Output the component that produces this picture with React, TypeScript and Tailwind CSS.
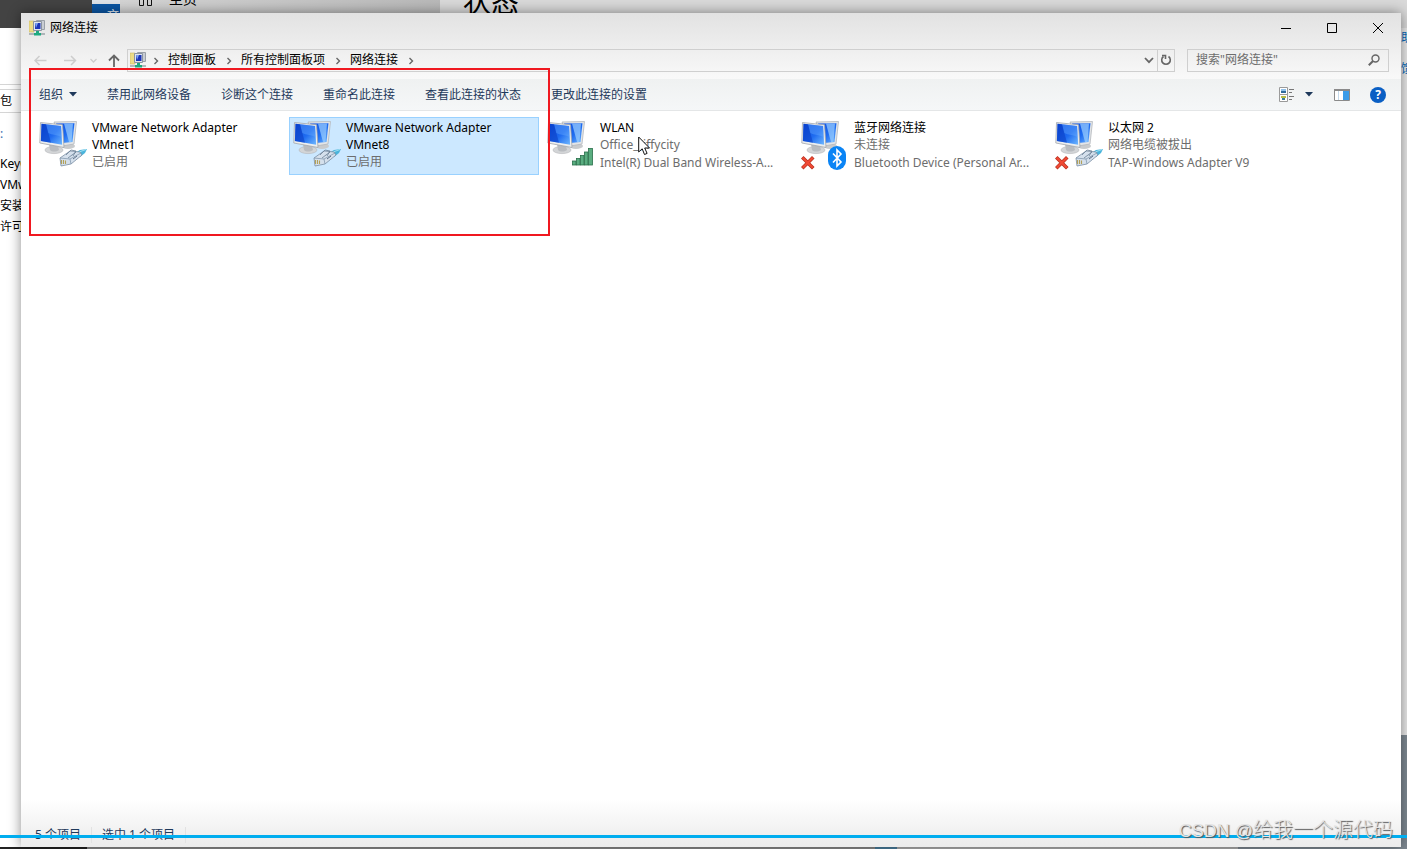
import type { ReactNode } from "react";
import { useState } from "react";

type Badge = "plug" | "signal" | "bluetooth";

interface Connection {
  id: string;
  name: string;
  details: string[];
  badge: Badge;
  offline?: boolean;
}

const connections: Connection[] = [
  { id: "vmnet1", name: "VMware Network Adapter VMnet1", details: ["已启用"], badge: "plug" },
  { id: "vmnet8", name: "VMware Network Adapter VMnet8", details: ["已启用"], badge: "plug" },
  {
    id: "wlan",
    name: "WLAN",
    details: ["Office_Jiffycity", "Intel(R) Dual Band Wireless-A..."],
    badge: "signal",
  },
  {
    id: "bluetooth",
    name: "蓝牙网络连接",
    details: ["未连接", "Bluetooth Device (Personal Ar..."],
    badge: "bluetooth",
    offline: true,
  },
  {
    id: "ethernet2",
    name: "以太网 2",
    details: ["网络电缆被拔出", "TAP-Windows Adapter V9"],
    badge: "plug",
    offline: true,
  },
];

const crumbs = ["控制面板", "所有控制面板项", "网络连接"];

const commands = [
  "禁用此网络设备",
  "诊断这个连接",
  "重命名此连接",
  "查看此连接的状态",
  "更改此连接的设置",
];

function FolderIcon() {
  return (
    <svg width="16" height="16" viewBox="0 0 16 16" className="shrink-0">
      <path d="M0 1h5v11H0z" fill="#ecdc86" stroke="#cdb963" strokeWidth=".6" />
      <path d="M7.500.500h8v9h-8z" fill="#c9cdd3" stroke="#9aa0a8" />
      <path d="M4.500 1.500h8v9h-8z" fill="#dfe5ee" stroke="#8a93a0" />
      <path d="M6 3h5.500v6H6z" fill="#1c35b8" />
      <path d="M6 3h3L7 8z" fill="#7da1f0" />
      <path d="M7 11h3v2h2v2.500H5V13h2z" fill="#1ea980" />
      <path d="M0 14h5M12 14h4" stroke="#9aa3a8" strokeWidth="1.400" />
    </svg>
  );
}

function Plug() {
  return (
    <g strokeLinejoin="round">
      <path d="M36 34l5-3 7-1-2 4-5 4z" fill="#49b4dc" />
      <path d="M40 33l7-2.500" stroke="#b5e8f5" strokeWidth=".8" />
      <path d="M21 39l10-7 10 1 2 3-11 9-10 2z" fill="#d5e0ec" stroke="#7a8da2" strokeWidth=".8" />
      <path d="M21 39l10 1 11-6M31 40l1 5" fill="none" stroke="#8499ae" strokeWidth=".8" />
      <path d="M27 36l5-5 5 1-3 5M29 39l8-6" fill="none" stroke="#6b8096" strokeWidth=".8" />
      <path d="M22.500 41v4M24.500 41v4M26.500 41.500v3.500" stroke="#b3a15a" strokeWidth="1.100" />
      <path d="M34 40l4-3" stroke="#5b6e86" strokeWidth="1" />
    </g>
  );
}

function Signal() {
  return (
    <g fill="#5aad80" stroke="#2a6f4a" strokeWidth=".8">
      <rect x="25.500" y="42" width="3.500" height="4" />
      <rect x="29.500" y="39.500" width="3.500" height="6.500" />
      <rect x="33.500" y="36.500" width="3.500" height="9.500" />
      <rect x="37.500" y="33" width="3.500" height="13" />
      <rect x="41.500" y="29.500" width="4" height="16.500" />
    </g>
  );
}

function Bluetooth() {
  return (
    <g>
      <rect x="27" y="27" width="18" height="24" rx="9" fill="#0a84f5" />
      <path
        d="M32 34.500l8 8.500-4 4V31l4 4-8 8.500"
        fill="none"
        stroke="#fff"
        strokeWidth="1.600"
      />
    </g>
  );
}

function ConnectionIcon({ badge, offline, id }: { badge: Badge; offline?: boolean; id: string }) {
  const screen = `url(#screen-${id})`;

  return (
    <svg width="50" height="52" viewBox="0 0 50 52" className="shrink-0">
      <defs>
        <linearGradient id={`screen-${id}`} x1="0" y1="0" x2="1" y2="1">
          <stop offset="0" stopColor="#0a4be0" />
          <stop offset=".55" stopColor="#1f6cf0" />
          <stop offset="1" stopColor="#6fb8ff" />
        </linearGradient>
      </defs>
      <ellipse cx="29" cy="27" rx="7" ry="3" fill="#c9cbcd" />
      <path d="M15 3l22.500-.5L35 25l-12 2z" fill="#e3e5e7" stroke="#b4b8bc" strokeWidth=".8" />
      <path d="M17 4.500l18.500-.2L33.500 23l-10 1z" fill={screen} />
      <path d="M25 4.500h9L32.500 23H30z" fill="#9cd0ff" opacity=".7" />
      <ellipse cx="15" cy="31" rx="9" ry="3.600" fill="#d3d5d7" stroke="#b3b6b9" strokeWidth=".6" />
      <path d="M10 25l9 2 1 4c-3 2-7 2-9 0z" fill="#b9bcc0" />
      <path d="M1.500 3.500l22 2.300 1.500 22.700L.8 24z" fill="#eceeef" stroke="#a3a7ac" strokeWidth=".8" />
      <path d="M2.500 4.800l19.600 2.200 1 18.800L1.900 22z" fill={screen} />
      <path d="M7 5.300l15 1.700.6 11c-4-2-9-2-13.600-4z" fill="#69adff" opacity=".4" />
      <path d="M2.500 4.800l4.500.5 5 18.500L1.900 22z" fill="#0738bd" opacity=".5" />
      {badge === "plug" && <Plug />}
      {badge === "signal" && <Signal />}
      {badge === "bluetooth" && <Bluetooth />}
      {offline && (
        <g strokeLinecap="square">
          <path d="M2.500 39.500l8.500 8.500M11 39.500L2.500 48" stroke="#b8301f" strokeWidth="3.600" />
          <path d="M2.500 39.500l8.500 8.500M11 39.500L2.500 48" stroke="#f04a35" strokeWidth="2.200" />
        </g>
      )}
    </svg>
  );
}

function Chevron() {
  return (
    <svg width="6" height="8" viewBox="0 0 6 8" className="mt-px shrink-0">
      <path d="M1.500 1l3 3-3 3" fill="none" stroke="#666" strokeWidth="1.400" />
    </svg>
  );
}

function Caret() {
  return (
    <svg width="8" height="5" viewBox="0 0 8 5" className="shrink-0">
      <path d="M0 0h8L4 4.500z" fill="#1e395b" />
    </svg>
  );
}

function WindowButton({ label, children }: { label: string; children: ReactNode }) {
  return (
    <button type="button" aria-label={label} className="flex h-[29px] w-[46px] items-center justify-center">
      <svg width="12" height="12" viewBox="0 0 12 12" fill="none" stroke="#000">
        {children}
      </svg>
    </button>
  );
}

function TitleBar() {
  return (
    <header className="flex h-[30px] items-center pl-2">
      <FolderIcon />
      <h1 className="ml-[5px] flex-1 text-xs text-black">网络连接</h1>
      <WindowButton label="最小化">
        <path d="M1 6.500h10" />
      </WindowButton>
      <WindowButton label="最大化">
        <path d="M1.500 1.500h9v9h-9z" />
      </WindowButton>
      <WindowButton label="关闭">
        <path d="M1 1l10 10M11 1L1 11" />
      </WindowButton>
    </header>
  );
}

function AddressRow() {
  return (
    <div className="flex h-9 items-center pb-0.5 pl-[13px] pr-3">
      <button type="button" aria-label="后退" className="w-[30px]">
        <svg width="13" height="11" viewBox="0 0 13 11" fill="none" stroke="#cdcdcd" strokeWidth="1.500">
          <path d="M12.500 5.500H1M5.500 1L1 5.500 5.500 10" />
        </svg>
      </button>
      <button type="button" aria-label="前进" className="w-[26px]">
        <svg width="13" height="11" viewBox="0 0 13 11" fill="none" stroke="#cdcdcd" strokeWidth="1.500">
          <path d="M0 5.500h11.500M7 1l4.500 4.500L7 10" />
        </svg>
      </button>
      <button type="button" aria-label="最近浏览的位置" className="w-[18px]">
        <svg width="7" height="5" viewBox="0 0 7 5" fill="none" stroke="#cdcdcd" strokeWidth="1.300">
          <path d="M.5 1l3 3 3-3" />
        </svg>
      </button>
      <button type="button" aria-label="上移" className="w-[19px]">
        <svg width="12" height="13" viewBox="0 0 12 13" fill="none" stroke="#666" strokeWidth="1.800">
          <path d="M6 13V1.500M1 6.500l5-5 5 5" />
        </svg>
      </button>

      <nav className="flex h-[23px] min-w-0 flex-1 items-center border border-[#cfcfcf] pl-0.5 text-xs text-black">
        <FolderIcon />
        <span className="ml-[7px] flex items-center gap-[9px]">
          <Chevron />
          {crumbs.map((crumb) => (
            <span key={crumb} className="flex items-center gap-[10px]">
              <a href="#" className="whitespace-nowrap">
                {crumb}
              </a>
              <Chevron />
            </span>
          ))}
        </span>
        <button type="button" aria-label="以前的位置" className="ml-auto flex w-4 justify-center">
          <svg width="10" height="7" viewBox="0 0 10 7" fill="none" stroke="#666" strokeWidth="1.800">
            <path d="M1 1l4 4.200L9 1" />
          </svg>
        </button>
        <button
          type="button"
          aria-label="刷新"
          className="flex h-full w-[17px] items-center justify-center border-l border-[#cfcfcf]"
        >
          <svg width="12" height="12" viewBox="0 0 12 12" fill="none" stroke="#666" strokeWidth="1.600">
            <path d="M8.500 2.500A4.300 4.300 0 1 1 3.500 2.500" />
            <path d="M2 1.500h3.500V5" />
          </svg>
        </button>
      </nav>

      <form className="ml-3 flex h-[23px] w-[202px] items-center border border-[#cfcfcf] px-2">
        <input
          type="search"
          aria-label="搜索网络连接"
          placeholder={'搜索"网络连接"'}
          className="min-w-0 flex-1 bg-transparent text-xs placeholder:text-[#6d6d6d] focus:outline-none"
        />
        <svg width="12" height="12" viewBox="0 0 12 12" fill="none" stroke="#666">
          <circle cx="7.500" cy="4.500" r="3.500" strokeWidth="1.400" />
          <path d="M5 7L.8 11.200" strokeWidth="2" />
        </svg>
      </form>
    </div>
  );
}

function CommandBar() {
  return (
    <div className="flex h-8 items-center border-b border-[#e4e6e7] bg-linear-to-b from-[#eff1f1] to-[#f5f7f8] pl-[18px] pr-[15px] text-xs text-[#1e395b]">
      <button type="button" className="mr-[30px] flex items-center gap-[6px]">
        组织
        <Caret />
      </button>
      <div className="flex flex-1 gap-[30px]">
        {commands.map((command) => (
          <button key={command} type="button" className="whitespace-nowrap">
            {command}
          </button>
        ))}
      </div>
      <button type="button" aria-label="更改视图" className="flex items-center gap-[10px]">
        <svg width="16" height="16" viewBox="0 0 16 16" fill="none">
          <path d="M.5.500h8v7h-8zM.5 7.500h8v7h-8z" fill="#fff" stroke="#9a9a9a" />
          <path d="M2 2h5v2H2z" fill="#8fc0ea" />
          <path d="M2 4h5v2H2z" fill="#2f6b9c" />
          <path d="M2 9h5v2H2z" fill="#b9bd45" />
          <path d="M3 11h3v2H3z" fill="#3d7c9c" />
          <path d="M10 2.500h5M10 5.500h3M10 9.500h5M10 12.500h3" stroke="#777" />
        </svg>
        <Caret />
      </button>
      <button type="button" aria-label="显示预览窗格" className="ml-[21px]">
        <svg width="16" height="12" viewBox="0 0 16 12" fill="none">
          <path d="M.5.500h15v11H.5z" fill="#fff" stroke="#8a8a8a" />
          <path d="M0 1h16" stroke="#8a8a8a" strokeWidth="2" />
          <path d="M9 2h6v9H9z" fill="#3a9be8" />
          <path d="M4.500 2v9" stroke="#c4d9ea" />
        </svg>
      </button>
      <button
        type="button"
        aria-label="获取帮助"
        className="ml-5 flex size-4 items-center justify-center rounded-full bg-[#0a5fc4] text-xs font-bold text-white"
      >
        ?
      </button>
    </div>
  );
}

function ConnectionTile({
  connection,
  selected,
  onSelect,
}: {
  connection: Connection;
  selected: boolean;
  onSelect: () => void;
}) {
  return (
    <button
      type="button"
      aria-pressed={selected}
      onClick={onSelect}
      className={`flex h-[58px] w-[250px] items-start border pl-[3px] pt-px text-left text-xs ${
        selected ? "border-[#99d1ff] bg-[#cce8ff]" : "border-transparent"
      }`}
    >
      <ConnectionIcon id={connection.id} badge={connection.badge} offline={connection.offline} />
      <span className="ml-[3px] flex min-w-0 flex-1 flex-col">
        <span className="pr-2 leading-[17px] text-black">{connection.name}</span>
        {connection.details.map((line) => (
          <span key={line} className="whitespace-nowrap leading-[18px] text-[#6d6d6d]">
            {line}
          </span>
        ))}
      </span>
    </button>
  );
}

// Windows that peek out from behind the explorer window
function Backdrop() {
  return (
    <div aria-hidden="true" className="absolute inset-0 flex flex-col text-xs">
      <div className="flex h-7 shrink-0">
        <div className="w-[92px] bg-[#434343]" />
        <div className="flex w-7 flex-col bg-[#dfe3e8]">
          <div className="mt-1 flex-1 overflow-hidden bg-[#0b56a4] pl-[15px] pt-1 leading-4 text-white">文</div>
        </div>
        <div className="flex w-80 items-start gap-[17px] bg-linear-to-r from-[#d4d4d4] to-[#b9b9b9] pl-[19px] text-sm text-black">
          <svg width="13" height="6" viewBox="0 0 13 6" fill="none" stroke="#111">
            <path d="M.5 0v5.500h4V0M8.500 0v5.500h4V0" />
          </svg>
          <span className="-mt-[11px]">主页</span>
        </div>
        <div className="flex-1 bg-[#d9d9d9] pl-[23px] text-black">
          <div className="-mt-[15px] text-[28px] leading-8">状态</div>
        </div>
      </div>
      <div className="flex min-h-0 flex-1 justify-between bg-[#f4f4f4]">
        <div className="w-8 overflow-hidden bg-white text-black">
          <div className="mt-[56px] h-[6px] border-y border-[#d5d5d5]" />
          <div className="h-[23px] border-b border-[#d5d5d5] leading-[22px]">包</div>
          <div className="mt-[10px] leading-[21px] text-[#3a6fb0]">:</div>
          <div className="mt-[9px] whitespace-nowrap leading-[21px]">
            KeyG
            <br />
            VMw
            <br />
            安装
            <br />
            许可
          </div>
        </div>
        <div className="flex w-[6px] flex-col overflow-hidden bg-[#e9e9e9] text-[#0067b8]">
          <div className="h-[31px] leading-5">助</div>
          <div className="leading-5">馈</div>
          <div className="mt-auto h-[112px] bg-[#7f8a93]" />
        </div>
      </div>
      <div className="flex h-0.5 shrink-0">
        <div className="w-[87px] bg-[#222]" />
        <div className="flex-[788] bg-[#8b8b8b]" />
        <div className="w-[22px] bg-[#4a7f9f]" />
        <div className="flex-[341] bg-[#b0b0b0]" />
        <div className="flex-[169] bg-[#7f8a93]" />
      </div>
    </div>
  );
}

export default function App() {
  const [selectedId, setSelectedId] = useState("vmnet8");

  return (
    <div className="relative h-screen overflow-hidden bg-[#e4e4e4] pb-0.5 pl-[21px] pr-[6px] pt-[13px] font-['Noto_Sans','Noto_Sans_CJK_SC',sans-serif]">
      <Backdrop />

      <main className="relative flex h-full flex-col bg-white shadow-[0_0_12px_rgba(0,0,0,0.45)]">
        <div className="bg-linear-to-b from-[#e2e2e2] to-[#f9f9f9]">
          <TitleBar />
          <AddressRow />
        </div>
        <CommandBar />
        <section className="flex flex-1 flex-wrap content-start gap-1 px-[14px] pt-[6px]">
          {connections.map((connection) => (
            <ConnectionTile
              key={connection.id}
              connection={connection}
              selected={connection.id === selectedId}
              onSelect={() => setSelectedId(connection.id)}
            />
          ))}
        </section>
        <footer className="flex h-12 items-end bg-linear-to-b from-white to-[#ebebeb] px-[14px] pb-1 text-xs text-[#1e395b]">
          <span className="border-r border-[#e2e2e2] pr-[10px]">5 个项目</span>
          <span className="border-r border-[#e2e2e2] px-[10px]">选中 1 个项目</span>
        </footer>
      </main>

      {/* Mouse pointer */}
      <svg
        width="13"
        height="20"
        viewBox="0 0 13 20"
        className="pointer-events-none absolute left-[638px] top-[136px]"
      >
        <path
          d="M.7 1v15l3.500-3.200L6.500 18.500l2.600-1.100-2.400-5.400h4.800z"
          fill="#fff"
          stroke="#111"
          strokeWidth="1"
        />
      </svg>

      {/* Annotation frame, progress line and watermark */}
      <div className="pointer-events-none absolute left-[29px] top-[68px] h-[168px] w-[521px] border-2 border-[#f01820]" />
      <div className="pointer-events-none absolute bottom-[11px] left-0 h-[3px] w-full bg-[#00adef]" />
      <p className="pointer-events-none absolute bottom-1 right-[14px] whitespace-nowrap font-['Liberation_Sans','Noto_Sans_CJK_SC',sans-serif] text-xl font-light leading-6 text-[#e4e4e4] [text-shadow:1px_1px_1px_#555]">
        <span className="text-lg">CSDN @</span>给我一个源代码
      </p>
    </div>
  );
}
